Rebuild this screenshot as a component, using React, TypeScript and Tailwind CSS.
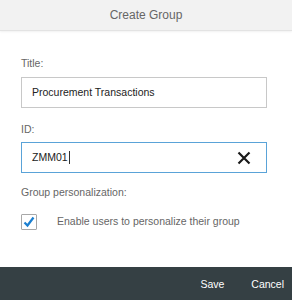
import React from "react";

const App: React.FC = () => {
    return (
        <div className="w-[292px] h-[300px] flex flex-col bg-white font-['Liberation_Sans',Arial,sans-serif]">
            {/* Header */}
            <div className="h-[31px] shrink-0 flex items-center justify-center bg-[#f2f2f2] border-b border-[#e3e3e3] shadow-[0_1px_2px_rgba(0,0,0,0.06)]">
                <span className="text-[12px] text-[#666]">Create Group</span>
            </div>

            {/* Body */}
            <div className="flex-1 flex flex-col px-[21px] pt-[25px]">
                <label className="text-[10.5px] leading-[14px] text-[#666]">Title:</label>
                <div className="mt-[7px] h-[31px] w-[246px] flex items-center border border-[#c8c8c8] px-[10px]">
                    <span className="text-[10.5px] text-[#222]">Procurement Transactions</span>
                </div>

                <label className="mt-[14px] text-[10.5px] leading-[14px] text-[#666]">ID:</label>
                <div className="mt-[6px] h-[31px] w-[246px] flex items-center border border-[#5aa3d8] px-[10px]">
                    <span className="text-[10.5px] text-[#222]">ZMM01</span>
                    <span className="w-px h-[13px] bg-[#333] ml-[1px]" />
                    <svg className="ml-auto mr-[5px]" width="14" height="14" viewBox="0 0 14 14">
                        <path d="M1.5 1.5 L12.5 12.5 M12.5 1.5 L1.5 12.5" stroke="#1a1a1a" strokeWidth="2.2" />
                    </svg>
                </div>

                <label className="mt-[12px] text-[10.5px] leading-[14px] text-[#666]">Group personalization:</label>
                <div className="mt-[15px] flex items-center">
                    <div className="w-[16px] h-[16px] border border-[#a8a8a8] rounded-[1px] flex items-center justify-center bg-white">
                        <svg width="12" height="12" viewBox="0 0 12 12">
                            <path d="M1.5 6.5 L4.5 9.5 L10.5 1.5" fill="none" stroke="#1b7fd0" strokeWidth="2.2" />
                        </svg>
                    </div>
                    <span className="ml-[20px] text-[10.5px] text-[#666]">Enable users to personalize their group</span>
                </div>
            </div>

            {/* Footer */}
            <div className="h-[33px] shrink-0 flex items-center justify-end bg-[#354044] pr-[8px] gap-[27px]">
                <span className="text-[10.5px] text-white pt-[2px]">Save</span>
                <span className="text-[10.5px] text-white pt-[2px]">Cancel</span>
            </div>
        </div>
    );
};

export default App;
